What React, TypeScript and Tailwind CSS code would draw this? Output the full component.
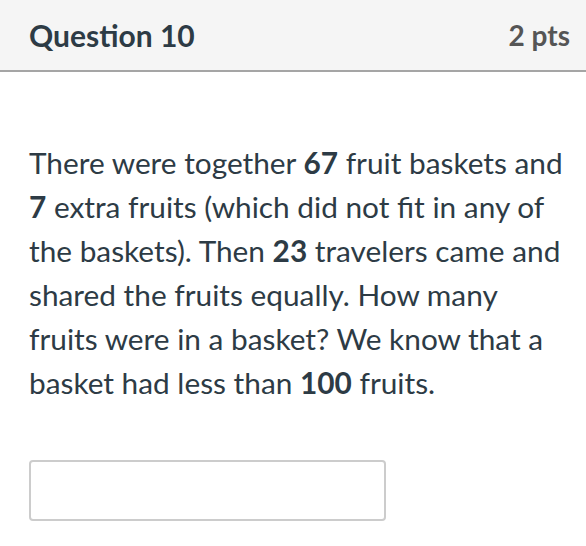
export default function App() {
  return (
    <div
      className="min-h-screen bg-white text-[#2d3b45]"
      style={{ fontFamily: 'Lato, "Noto Sans", sans-serif' }}
    >
      {/* Header */}
      <header className="flex h-[72px] items-center justify-between border-b-2 border-[#a5a5a5] bg-[#f5f5f5] pl-[29px] pr-[16px]">
        <h2 className="text-[30px] font-bold">Question 10</h2>
        <span className="text-[28px] font-bold text-[#555]">2 pts</span>
      </header>

      {/* Body */}
      <div className="pl-[29px] pr-[20px] pt-[69px]">
        <p className="text-[29.8px] leading-[44px]">
          There were together <b>67</b> fruit baskets and <b>7</b> extra fruits (which did not fit in any of
          the baskets). Then <b>23</b> travelers came and shared the fruits equally. How many fruits were in a
          basket? We know that a basket had less than <b>100</b> fruits.
        </p>
        <input
          type="text"
          className="mt-[55px] h-[61px] w-[357px] rounded-[4px] border-2 border-[#ccc] bg-white px-2 text-[20px] outline-none"
        />
      </div>
    </div>
  );
}
